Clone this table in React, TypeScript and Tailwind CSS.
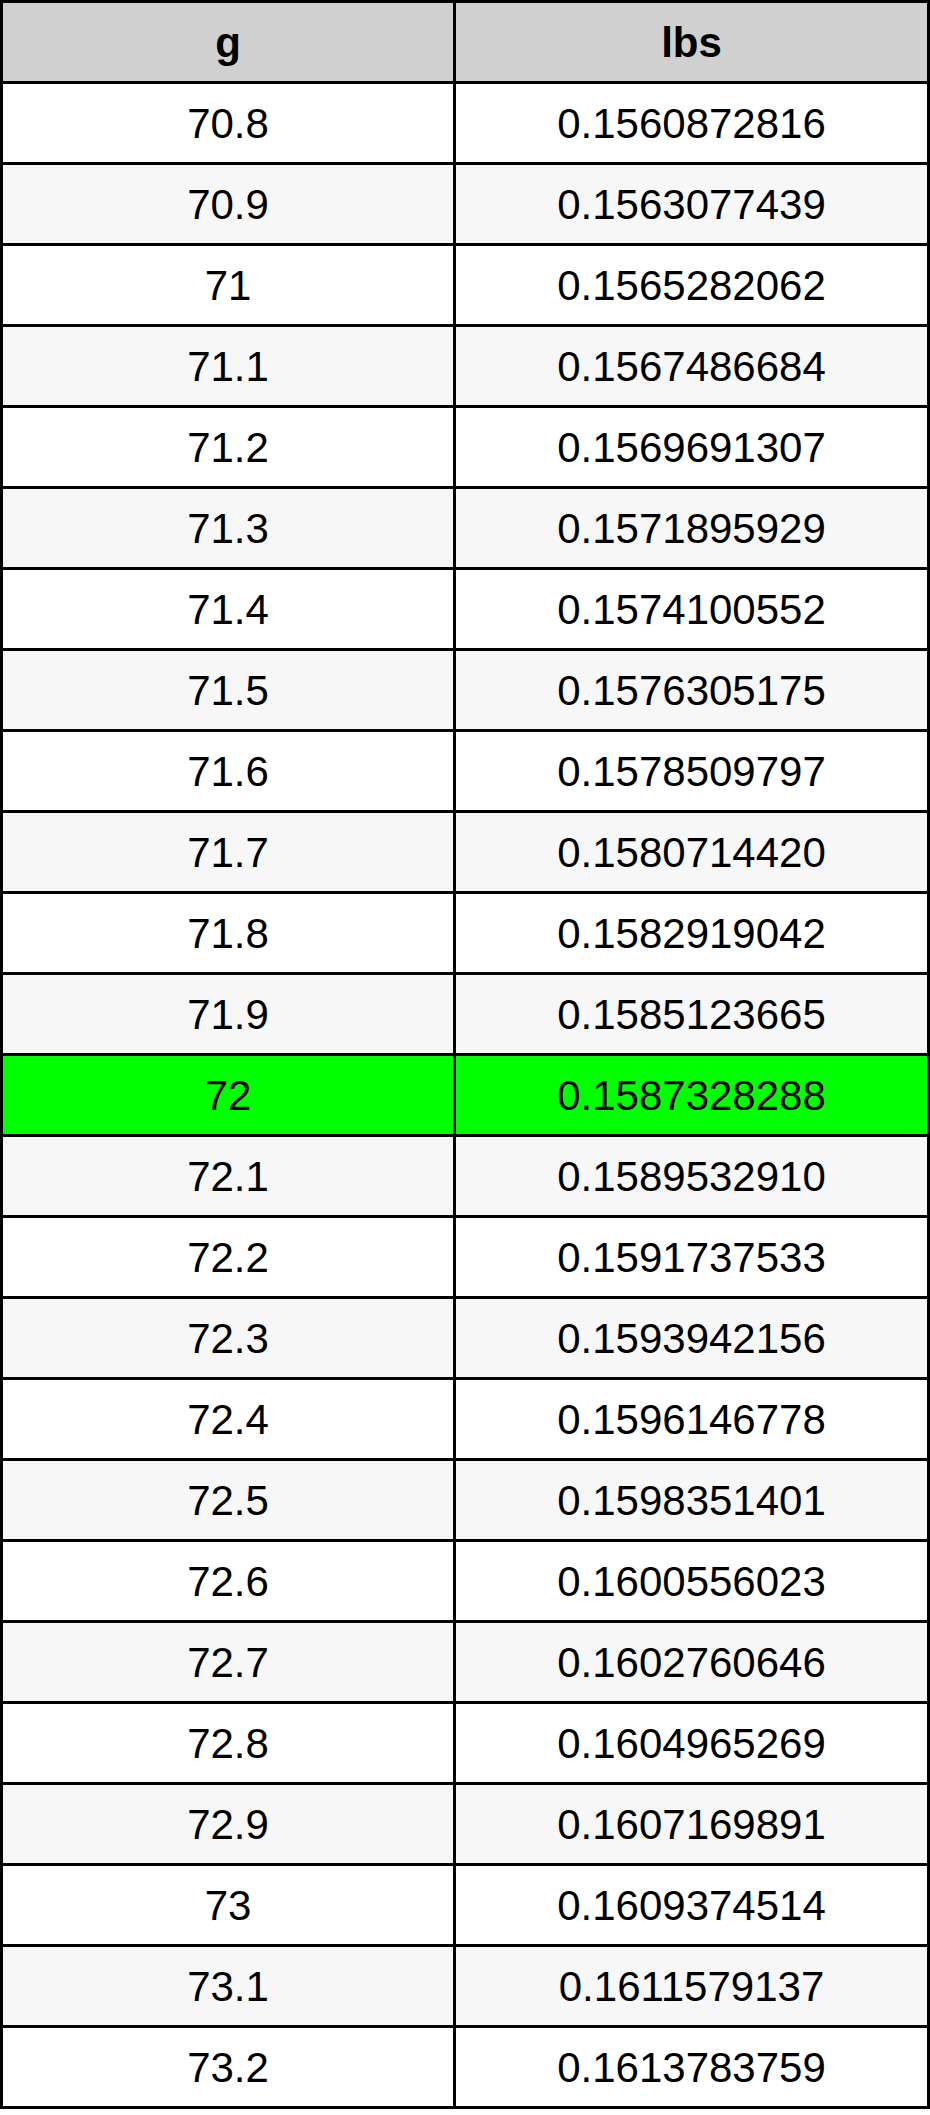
import React from "react";

const rows: [string, string][] = [
  ["70.8", "0.1560872816"],
  ["70.9", "0.1563077439"],
  ["71", "0.1565282062"],
  ["71.1", "0.1567486684"],
  ["71.2", "0.1569691307"],
  ["71.3", "0.1571895929"],
  ["71.4", "0.1574100552"],
  ["71.5", "0.1576305175"],
  ["71.6", "0.1578509797"],
  ["71.7", "0.1580714420"],
  ["71.8", "0.1582919042"],
  ["71.9", "0.1585123665"],
  ["72", "0.1587328288"],
  ["72.1", "0.1589532910"],
  ["72.2", "0.1591737533"],
  ["72.3", "0.1593942156"],
  ["72.4", "0.1596146778"],
  ["72.5", "0.1598351401"],
  ["72.6", "0.1600556023"],
  ["72.7", "0.1602760646"],
  ["72.8", "0.1604965269"],
  ["72.9", "0.1607169891"],
  ["73", "0.1609374514"],
  ["73.1", "0.1611579137"],
  ["73.2", "0.1613783759"],
];

const rowBg = (i: number) => {
  if (rows[i][0] === "72") return "bg-[#00ff00]";
  return i % 2 === 1 ? "bg-[#f7f7f7]" : "bg-white";
};

const App: React.FC = () => {
  return (
    <div className="w-[930px] bg-white font-['Liberation_Sans',Arial,sans-serif] text-black">
      <div className="grid grid-cols-[450px_471px] auto-rows-[78px] gap-[3px] p-[3px] bg-black text-[42px]">
        <div className="bg-[#d0d0d0] flex items-center justify-center font-bold">g</div>
        <div className="bg-[#d0d0d0] flex items-center justify-center font-bold">lbs</div>
        {rows.map(([g, lbs], i) => (
          <React.Fragment key={g}>
            <div className={`${rowBg(i)} flex items-center justify-center`}>{g}</div>
            <div className={`${rowBg(i)} flex items-center justify-center`}>{lbs}</div>
          </React.Fragment>
        ))}
      </div>
    </div>
  );
};

export default App;
